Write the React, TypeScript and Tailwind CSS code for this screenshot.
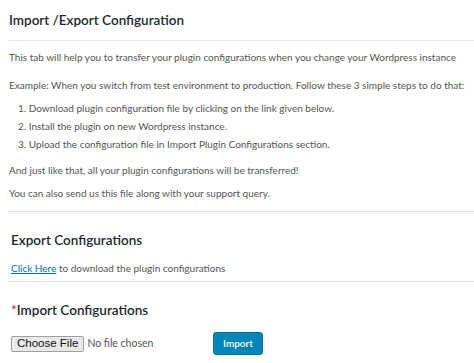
export default function App() {
  const body = "text-[10px] leading-[14px] text-[#555] whitespace-nowrap";
  const heading = "text-[13.5px] leading-[20px] font-semibold text-[#23282d] whitespace-nowrap";
  return (
    <div className="w-[474px] h-[363px] bg-white overflow-hidden" style={{ fontFamily: 'Lato, "Open Sans", sans-serif' }}>
      <div className="pl-[8px]">
        <h1 className={`mt-[10px] pl-[1px] ${heading}`}>Import /Export Configuration</h1>
        <div className="mt-[10px] border-t border-[#e5e5e5]" />
        <p className={`mt-[9px] pl-[1px] ${body}`}>This tab will help you to transfer your plugin configurations when you change your Wordpress instance</p>
        <p className={`mt-[14px] pl-[1px] ${body}`}>Example: When you switch from test environment to production. Follow these 3 simple steps to do that:</p>
        <ol className="mt-[7px] pl-[10px] text-[10px] leading-[18px] text-[#555] whitespace-nowrap">
          <li>1. Download plugin configuration file by clicking on the link given below.</li>
          <li>2. Install the plugin on new Wordpress instance.</li>
          <li>3. Upload the configuration file in Import Plugin Configurations section.</li>
        </ol>
        <p className={`mt-[10px] pl-[1px] ${body}`}>And just like that, all your plugin configurations will be transferred!</p>
        <p className={`mt-[9px] pl-[1px] ${body}`}>You can also send us this file along with your support query.</p>
        <div className="mt-[11px] border-t border-[#e5e5e5]" />
        <h2 className={`mt-[18px] pl-[3px] ${heading}`}>Export Configurations</h2>
        <p className={`mt-[11px] pl-[3px] ${body}`}>
          <a className="text-[#0073aa] underline">Click Here</a> to download the plugin configurations
        </p>
        <div className="mt-[6px] border-t border-[#e5e5e5]" />
        <h2 className={`mt-[18px] pl-[3px] ${heading}`}>
          <span className="text-[#dc3232]">*</span>Import Configurations
        </h2>
        <div className="mt-[12px] pl-[3px] flex items-center h-[23px]">
          <div className="flex items-center w-[202px]">
            <span className="h-[16px] px-[5px] flex items-center border border-[#a0a0a0] rounded-[2px] bg-[#e9e9e9] text-[11.5px] text-[#111]" style={{ fontFamily: '"Liberation Sans", Arial, sans-serif' }}>Choose File</span>
            <span className="ml-[3px] text-[10.5px] text-[#555]">No file chosen</span>
          </div>
          <button className="w-[50px] h-[23px] rounded-[3px] bg-[#0085ba] border border-[#0073aa] text-white text-[10px] font-semibold">Import</button>
        </div>
      </div>
    </div>
  );
}
